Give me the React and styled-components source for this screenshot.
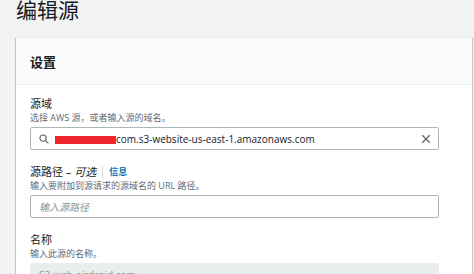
import styled, { createGlobalStyle } from 'styled-components';

const GlobalStyle = createGlobalStyle`
  html, body {
    margin: 0;
    padding: 0;
    background: #f2f3f3;
    overflow: hidden;
  }
  body {
    font-family: "Open Sans", "Noto Sans CJK SC", sans-serif;
    color: #16191f;
  }
`

const Page = styled.div`
  padding: 0 2px 0 16px;
`

const Title = styled.h1`
  margin: -4px 0 13px 0;
  font-size: 21px;
  line-height: 28px;
  font-weight: 400;
  color: #16191f;
`

const Card = styled.section`
  background: #fff;
  border-top: 1px solid #eaeded;
  box-shadow: 0 1px 1px 0 rgba(0, 28, 36, 0.3), 1px 1px 1px 0 rgba(0, 28, 36, 0.15), -1px 1px 1px 0 rgba(0, 28, 36, 0.15);
`

const CardHeader = styled.div`
  height: 46px;
  display: flex;
  align-items: center;
  padding-left: 14px;
  background: #fafafa;
  border-bottom: 1px solid #eaeded;
  font-size: 13px;
  font-weight: 700;
`

const CardBody = styled.div`
  padding: 12px 14px 20px 14px;
  display: flex;
  flex-direction: column;
  gap: 15px;
`

const Field = styled.div`
  display: flex;
  flex-direction: column;
`

const Label = styled.div`
  font-size: 11px;
  line-height: 14px;
  display: flex;
  align-items: center;
  gap: 6px;
`

const Optional = styled.i`
  font-style: italic;
`

const Divider = styled.span`
  width: 1px;
  height: 12px;
  background: #d5dbdb;
`

const InfoLink = styled.span`
  color: #0073bb;
  font-size: 9px;
  font-weight: 700;
`

const Hint = styled.div`
  font-size: 9px;
  line-height: 14px;
  color: #5f6b7a;
`

const InputBox = styled.div`
  margin-top: 2px;
  width: 409px;
  height: 23px;
  box-sizing: border-box;
  border: 1px solid ${p => (p.$disabled ? '#eaeded' : '#aab7b8')};
  border-radius: 2px;
  background: ${p => (p.$disabled ? '#eaeded' : '#fff')};
  display: flex;
  align-items: center;
  padding: 0 7px 0 8px;
  gap: 6px;
  font-size: 10px;
  color: ${p => (p.$disabled ? '#879596' : '#16191f')};
`

const Placeholder = styled.span`
  font-style: italic;
  color: #879596;
  font-size: 10px;
`

const Redacted = styled.span`
  display: inline-block;
  vertical-align: middle;
  width: 61px;
  height: 8px;
  background: #f0262e;
`

const Value = styled.span`
  flex: 1;
  white-space: nowrap;
  overflow: hidden;
`

const SearchIcon = () => (
  <svg width="10" height="10" viewBox="0 0 16 16" fill="none" stroke="#545b64" strokeWidth="1.8" style={{ flex: 'none' }}>
    <circle cx="6.5" cy="6.5" r="5" />
    <line x1="10.2" y1="10.2" x2="15" y2="15" />
  </svg>
)

const ClearIcon = () => (
  <svg width="10" height="10" viewBox="0 0 16 16" fill="none" stroke="#545b64" strokeWidth="1.8" style={{ flex: 'none' }}>
    <line x1="2" y1="2" x2="14" y2="14" />
    <line x1="14" y1="2" x2="2" y2="14" />
  </svg>
)

function App() {
  return (
    <Page>
      <GlobalStyle />
      <Title>编辑源</Title>
      <Card>
        <CardHeader>设置</CardHeader>
        <CardBody>
          <Field>
            <Label>源域</Label>
            <Hint>选择 AWS 源，或者输入源的域名。</Hint>
            <InputBox>
              <SearchIcon />
              <Value>
                <Redacted />
                com.s3-website-us-east-1.amazonaws.com
              </Value>
              <ClearIcon />
            </InputBox>
          </Field>
          <Field>
            <Label>
              <span>源路径 – <Optional>可选</Optional></span>
              <Divider />
              <InfoLink>信息</InfoLink>
            </Label>
            <Hint>输入要附加到源请求的源域名的 URL 路径。</Hint>
            <InputBox>
              <Placeholder>输入源路径</Placeholder>
            </InputBox>
          </Field>
          <Field>
            <Label>名称</Label>
            <Hint>输入此源的名称。</Hint>
            <InputBox $disabled>S3-web-airdroid.com</InputBox>
          </Field>
        </CardBody>
      </Card>
    </Page>
  )
}

export default App
